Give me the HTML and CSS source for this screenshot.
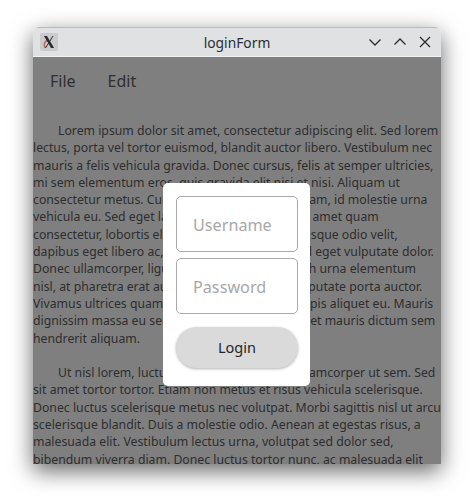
FILE: index.html
```html
<!DOCTYPE html>
<html lang="en">
<head>
    <meta charset="UTF-8">
    <title>loginForm</title>
    <link rel="stylesheet" href="styles.css">
</head>
<body>
    <div class="window">
        <div class="titlebar">
            <svg class="app-icon" width="18" height="18" viewBox="0 0 18 18">
                <rect width="18" height="18" rx="2" fill="#c9cbcd"/>
                <path d="M5 15 C3 11 5 8 8 7" fill="none" stroke="#c0605a" stroke-width="1.5"/>
                <path d="M13 15 C12 11 9 8 8 7" fill="none" stroke="#d09088" stroke-width="1"/>
                <path d="M4 3 L7 3 L14 15 L11 15 Z" fill="#2a2a2a"/>
                <path d="M12.5 3 L13.5 3 L6 15 L5 15 Z" fill="#2a2a2a"/>
            </svg>
            <div class="title">loginForm</div>
            <div class="controls">
                <svg width="14" height="14" viewBox="0 0 14 14"><path d="M1.5 4.5 L7 10 L12.5 4.5" class="ctl"/></svg>
                <svg width="14" height="14" viewBox="0 0 14 14"><path d="M1.5 9.5 L7 4 L12.5 9.5" class="ctl"/></svg>
                <svg width="14" height="14" viewBox="0 0 14 14"><path d="M2 2 L12 12 M12 2 L2 12" class="ctl"/></svg>
            </div>
        </div>
        <div class="content">
            <div class="menubar">
                <span>File</span>
                <span>Edit</span>
            </div>
            <div class="text">
                <p>Lorem ipsum dolor sit amet, consectetur adipiscing elit. Sed lorem<br>
                lectus, porta vel tortor euismod, blandit auctor libero. Vestibulum nec<br>
                mauris a felis vehicula gravida. Donec cursus, felis at semper ultricies,<br>
                mi sem elementum eros, quis gravida elit nisi et nisi. Aliquam ut<br>
                consectetur metus. Curabitur vel mi ut lorem quam, id molestie urna<br>
                vehicula eu. Sed eget lacus vitae nulla dictum sit amet quam<br>
                consectetur, lobortis elit at, sodales non a scelerisque odio velit,<br>
                dapibus eget libero ac, sodales nunc, mauris sed eget vulputate dolor.<br>
                Donec ullamcorper, ligula non tempor felis a nibh urna elementum<br>
                nisl, at pharetra erat augue eget nisl ut in mi vulputate porta auctor.<br>
                Vivamus ultrices quam at lectus et nulla ante turpis aliquet eu. Mauris<br>
                dignissim massa eu sem finibus vitae lorem sed et mauris dictum sem<br>
                hendrerit aliquam.</p>
                <p>Ut nisl lorem, luctus at tortor vitae nisi at ullamcorper ut sem. Sed<br>
                sit amet tortor tortor. Etiam non metus et risus vehicula scelerisque.<br>
                Donec luctus scelerisque metus nec volutpat. Morbi sagittis nisl ut arcu<br>
                scelerisque blandit. Duis a molestie odio. Aenean at egestas risus, a<br>
                malesuada elit. Vestibulum lectus urna, volutpat sed dolor sed,<br>
                bibendum viverra diam. Donec luctus tortor nunc, ac malesuada elit</p>
            </div>
            <div class="dim">
                <form class="login">
                    <div class="field">Username</div>
                    <div class="field">Password</div>
                    <button type="button" class="login-btn">Login</button>
                </form>
            </div>
        </div>
    </div>
</body>
</html>
```

FILE: styles.css
```css
html, body {
    height: 100%;
}

body {
    margin: 0;
    padding: 27px 33px 0;
    box-sizing: border-box;
    background-color: white;
    font-family: "Noto Sans", sans-serif;
    overflow: hidden;
}

.window {
    width: 408px;
    height: 437px;
    border-radius: 6px 6px 0 0;
    box-shadow: 0 7px 22px rgba(0, 0, 0, 0.6);
    display: flex;
    flex-direction: column;
    overflow: hidden;
}

.titlebar {
    height: 30px;
    flex: none;
    display: flex;
    align-items: center;
    padding: 0 9px 0 7px;
    background-color: #dfe1e3;
    border-top: 1px solid #b9bbbd;
    border-bottom: 1px solid #f0f1f2;
    box-sizing: border-box;
    color: #2a2e32;
}

.app-icon {
    flex: none;
}

.title {
    flex: 1;
    text-align: center;
    font-size: 13.8px;
    padding-left: 48px;
}

.controls {
    display: flex;
    gap: 11px;
}

.ctl {
    fill: none;
    stroke: #2a2e32;
    stroke-width: 1.3;
}

.content {
    flex: 1;
    position: relative;
    background-color: white;
    color: #5c5c5e;
    overflow: hidden;
}

.menubar {
    display: flex;
    gap: 32px;
    padding: 13px 17px 0;
    font-size: 16px;
    line-height: 22px;
    color: #606062;
}

.text {
    margin-top: 30px;
    font-size: 12.25px;
    line-height: 17.3px;
    white-space: nowrap;
}

.text p {
    margin: 0 0 17.3px;
    text-indent: 25px;
}

.dim {
    position: absolute;
    inset: 0;
    background-color: rgba(0, 0, 0, 0.5);
    display: flex;
    justify-content: center;
    padding: 126px 1px 0 0;
    box-sizing: border-box;
}

.login {
    width: 147px;
    height: 203px;
    box-sizing: border-box;
    background-color: white;
    border-radius: 5px;
    padding: 13px 12px 13px 13px;
    display: flex;
    flex-direction: column;
    gap: 6px;
}

.field {
    height: 56px;
    box-sizing: border-box;
    border: 1px solid #a9a9a9;
    border-radius: 5px;
    padding: 2px 16px 0;
    display: flex;
    align-items: center;
    font-size: 16.2px;
    color: #a8a8a8;
}

.login-btn {
    height: 41px;
    margin-top: 7px;
    padding: 0 0 2px;
    border: none;
    border-radius: 21px;
    background-color: #dadada;
    box-shadow: 0 1px 3px rgba(0, 0, 0, 0.3);
    font-family: inherit;
    font-size: 14.5px;
    color: #232629;
}
```
